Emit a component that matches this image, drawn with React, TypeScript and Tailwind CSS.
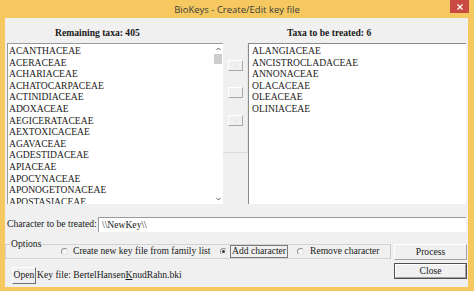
import React from "react";

const leftItems = [
  "ACANTHACEAE",
  "ACERACEAE",
  "ACHARIACEAE",
  "ACHATOCARPACEAE",
  "ACTINIDIACEAE",
  "ADOXACEAE",
  "AEGICERATACEAE",
  "AEXTOXICACEAE",
  "AGAVACEAE",
  "AGDESTIDACEAE",
  "APIACEAE",
  "APOCYNACEAE",
  "APONOGETONACEAE",
  "APOSTASIACEAE",
];

const rightItems = [
  "ALANGIACEAE",
  "ANCISTROCLADACEAE",
  "ANNONACEAE",
  "OLACACEAE",
  "OLEACEAE",
  "OLINIACEAE",
];

function Radio({ checked }: { checked?: boolean }) {
  return (
    <div className="w-[7px] h-[7px] rounded-full border border-[#8f8f8f] border-r-[#e6e6e6] border-b-[#e6e6e6] bg-[#f7f7f7] flex items-center justify-center shrink-0">
      {checked && <div className="w-[3px] h-[3px] rounded-full bg-[#333]" />}
    </div>
  );
}

function MidButton({ glyph }: { glyph: string }) {
  return (
    <div className="w-[15px] h-[11px] ml-[5px] border-t border-l border-t-white border-l-white border-r border-b border-r-[#a8a8a8] border-b-[#a8a8a8] flex items-center justify-center text-[7px] leading-none text-[#d0d0d0]">
      {glyph}
    </div>
  );
}

export default function App() {
  return (
    <div className="w-[474px] h-[291px] bg-[#f5c95f] flex flex-col overflow-hidden font-['Liberation_Serif',serif] text-[#1a1a1a]">
      <div className="h-[18px] relative flex items-center justify-center pt-[1px]">
        <span className="text-[9.5px] text-[#3c3c3c] font-['Open_Sans',sans-serif] leading-none">
          BioKeys - Create/Edit key file
        </span>
        <div className="absolute right-[5px] top-0 w-[19px] h-[13px] bg-[#c94a43] flex items-center justify-center">
          <svg width="6" height="6" viewBox="0 0 6 6">
            <path d="M0.5 0.5 L5.5 5.5 M5.5 0.5 L0.5 5.5" stroke="white" strokeWidth="1.3" />
          </svg>
        </div>
      </div>

      <div className="ml-[5px] mr-[6px] h-[269px] bg-[#f0f0f0] flex flex-col text-[9.6px]">
        {/* headers */}
        <div className="mt-[9px] h-[12px] flex items-center font-bold leading-none">
          <div className="w-[232px] pl-[50px]">Remaining taxa: 405</div>
          <div className="pl-[50px]">Taxa to be treated: 6</div>
        </div>

        {/* lists */}
        <div className="mt-[4px] h-[161px] flex pl-[2px]">
          <div className="w-[216px] h-full bg-white border-t border-l border-[#9a9a9a] flex overflow-hidden">
            <div className="flex-1 overflow-hidden pl-[1px] pt-[1px] leading-[11.6px]">
              {leftItems.map((t) => (
                <div key={t} className="whitespace-nowrap">{t}</div>
              ))}
            </div>
            <div className="w-[10px] h-full flex flex-col items-center bg-white">
              <div className="h-[10px] flex items-center justify-center">
                <svg width="5" height="4" viewBox="0 0 5 4">
                  <path d="M0.5 3 L2.5 1 L4.5 3" stroke="#606060" fill="none" strokeWidth="1" />
                </svg>
              </div>
              <div className="w-[8px] h-[10px] bg-[#cdcdcd]" />
              <div className="flex-1" />
              <div className="h-[10px] flex items-center justify-center">
                <svg width="5" height="4" viewBox="0 0 5 4">
                  <path d="M0.5 1 L2.5 3 L4.5 1" stroke="#606060" fill="none" strokeWidth="1" />
                </svg>
              </div>
            </div>
          </div>

          <div className="w-[25px] h-full flex flex-col">
            <div className="h-[110px] border-b border-[#dadada] border-r border-r-[#e4e4e4] flex flex-col">
              <div className="h-[17px]" />
              <MidButton glyph="›" />
              <div className="h-[16px]" />
              <MidButton glyph="" />
              <div className="h-[17px]" />
              <MidButton glyph="‹" />
            </div>
          </div>

          <div className="w-[218px] h-full bg-white border-t border-l border-[#8a8a8a] pl-[3px] pt-[1px] leading-[11.6px]">
            {rightItems.map((t) => (
              <div key={t} className="whitespace-nowrap">{t}</div>
            ))}
          </div>
        </div>

        {/* character row */}
        <div className="mt-[13px] h-[15px] flex items-center">
          <div className="w-[93px] pl-[2px] whitespace-nowrap">Character to be treated:</div>
          <div className="flex-1 mr-[2px] h-full bg-white border-t border-l border-[#9a9a9a] pl-[3px] flex items-center">
            {"\\\\NewKey\\\\"}
          </div>
        </div>

        {/* options + buttons */}
        <div className="mt-[12px] flex">
          <div className="w-[386px] flex flex-col">
            <div className="relative h-[15px] border border-[#d2d2d2] border-r-[#c8c8c8] flex items-center">
              <div className="absolute left-[4px] -top-[6px] px-[1px] bg-[#f0f0f0] leading-none">Options</div>
              <div className="w-[55px]" />
              <div className="w-[159px] flex items-center">
                <Radio />
                <span className="ml-[5px] whitespace-nowrap">Create new key file from family list</span>
              </div>
              <div className="w-[77px] flex items-center">
                <Radio checked />
                <span className="ml-[3px] px-[1px] h-[13px] flex items-center border border-[#7a7a7a] whitespace-nowrap">Add character</span>
              </div>
              <div className="flex items-center">
                <Radio />
                <span className="ml-[6px] whitespace-nowrap">Remove character</span>
              </div>
            </div>
            <div className="mt-[8px] pl-[7px] flex items-center">
              <div className="w-[24px] h-[17px] border-t border-l border-white border-r border-b border-r-[#6e6e6e] border-b-[#6e6e6e] flex items-center justify-center">
                Open
              </div>
              <span className="ml-[1px] whitespace-nowrap">
                Key file: BertelHansen<span className="underline">K</span>nudRahn.bki
              </span>
            </div>
          </div>
          <div className="ml-[3px] flex flex-col">
            <div className="w-[73px] h-[16px] border-t border-l border-white border-r border-b border-r-[#a0a0a0] border-b-[#a0a0a0] flex items-center justify-center">
              Process
            </div>
            <div className="mt-[3px] w-[73px] h-[16px] border border-[#505050] flex items-center justify-center">
              <div className="w-full h-full border-t border-l border-white border-r border-b border-r-[#a0a0a0] border-b-[#a0a0a0] flex items-center justify-center">
                Close
              </div>
            </div>
          </div>
        </div>
      </div>
    </div>
  );
}
